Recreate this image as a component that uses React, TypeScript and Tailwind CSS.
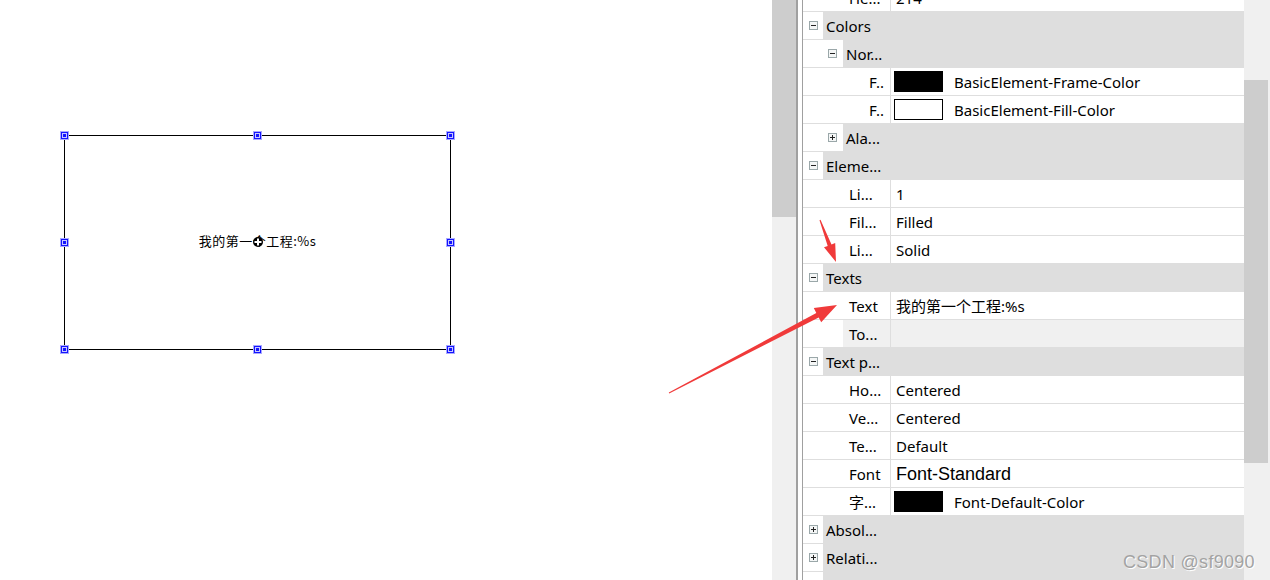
import React from 'react';

type Row =
  | { kind: 'cat'; level: number; label: string; open?: boolean }
  | { kind: 'prop'; level: number; label: string; value?: string; swatch?: string; strong?: boolean; dim?: boolean };

const ROWS: Row[] = [
  { kind: 'prop', level: 1, label: 'He...', value: '214' },
  { kind: 'cat', level: 0, label: 'Colors', open: true },
  { kind: 'cat', level: 1, label: 'Nor...', open: true },
  { kind: 'prop', level: 2, label: 'F..', swatch: '#000', value: 'BasicElement-Frame-Color' },
  { kind: 'prop', level: 2, label: 'F..', swatch: '#fff', value: 'BasicElement-Fill-Color' },
  { kind: 'cat', level: 1, label: 'Ala...' },
  { kind: 'cat', level: 0, label: 'Eleme...', open: true },
  { kind: 'prop', level: 1, label: 'Li...', value: '1' },
  { kind: 'prop', level: 1, label: 'Fil...', value: 'Filled' },
  { kind: 'prop', level: 1, label: 'Li...', value: 'Solid' },
  { kind: 'cat', level: 0, label: 'Texts', open: true },
  { kind: 'prop', level: 1, label: 'Text', value: '我的第一个工程:%s' },
  { kind: 'prop', level: 1, label: 'To...', value: '', dim: true },
  { kind: 'cat', level: 0, label: 'Text p...', open: true },
  { kind: 'prop', level: 1, label: 'Ho...', value: 'Centered' },
  { kind: 'prop', level: 1, label: 'Ve...', value: 'Centered' },
  { kind: 'prop', level: 1, label: 'Te...', value: 'Default' },
  { kind: 'prop', level: 1, label: 'Font', value: 'Font-Standard', strong: true },
  { kind: 'prop', level: 1, label: '字...', swatch: '#000', value: 'Font-Default-Color' },
  { kind: 'cat', level: 0, label: 'Absol...' },
  { kind: 'cat', level: 0, label: 'Relati...' },
  { kind: 'cat', level: 0, label: '' },
];

function Toggle({ open }: { open?: boolean }) {
  return (
    <svg width="9" height="9" viewBox="0 0 9 9" className="shrink-0">
      <rect x="0.5" y="0.5" width="8" height="8" fill="#f4f6f6" stroke="#9aa7a9" />
      <line x1="2" y1="4.5" x2="7" y2="4.5" stroke="#222" />
      {!open && <line x1="4.5" y1="2" x2="4.5" y2="7" stroke="#222" />}
    </svg>
  );
}

function Handle({ x, y }: { x: number; y: number }) {
  return (
    <svg width="9" height="9" viewBox="0 0 9 9" className="absolute" style={{ left: x - 4, top: y - 4 }}>
      <rect x="0" y="0" width="9" height="9" fill="#a8a8ff" />
      <rect x="1" y="1" width="7" height="7" fill="#1414ff" />
      <rect x="2.5" y="2.5" width="4" height="4" fill="none" stroke="#c8c8ff" strokeWidth="1" />
    </svg>
  );
}

function GridRow({ row }: { row: Row }) {
  if (row.kind === 'cat') {
    return (
      <div className="flex h-[28px] border-b border-[#dedede]">
        <div className={row.level === 0 ? 'w-[20px] flex items-center justify-center' : 'w-[40px] flex items-center justify-end pr-[6px]'}>
          <Toggle open={row.open} />
        </div>
        <div className="flex-1 bg-[#dedede] flex items-center pl-[3px] pt-[2px] text-black">{row.label}</div>
      </div>
    );
  }
  const cellW = row.level === 2 ? 'w-[28px]' : 'w-[48px]';
  const indent = row.level === 2 ? 'w-[60px]' : 'w-[40px]';
  return (
    <div className="flex h-[28px] border-b border-[#dedede]">
      <div className={`${indent} shrink-0`} />
      <div className={`${cellW} shrink-0 border-r border-[#dedede] flex items-center pl-[6px] pt-[2px] whitespace-nowrap overflow-hidden ${row.dim ? 'bg-[#f0f0f0]' : ''}`}>
        {row.label}
      </div>
      <div className={`flex-1 flex items-center whitespace-nowrap ${row.dim ? 'bg-[#f0f0f0]' : ''} ${row.swatch ? 'pl-[3px]' : 'pl-[5px] pt-[2px]'}`}>
        {row.swatch && (
          <span className="w-[49px] h-[21px] border border-black mr-[11px] shrink-0" style={{ background: row.swatch }} />
        )}
        <span className={row.strong ? "font-['Liberation_Sans',sans-serif] text-[18px]" : row.swatch ? 'pt-[2px]' : ''}>
          {row.value}
        </span>
      </div>
    </div>
  );
}

export default function App() {
  return (
    <div className="relative w-[1270px] h-[580px] overflow-hidden bg-white flex font-['Noto_Sans','Noto_Sans_CJK_SC',sans-serif] text-[15px] text-black">
      {/* drawing canvas */}
      <div className="relative w-[772px] h-full bg-white shrink-0">
        <div className="absolute left-[64px] top-[135px] w-[387px] h-[215px] border border-black flex items-center justify-center">
          <span className="text-[13px] leading-none tracking-[0.5px] font-['Noto_Sans_CJK_SC',sans-serif] -mt-[5px]">我的第一个工程:%s</span>
        </div>
        {[
          [64, 135], [257, 135], [450, 135],
          [64, 242], [450, 242],
          [64, 349], [257, 349], [450, 349],
        ].map(([x, y]) => (
          <Handle key={`${x}-${y}`} x={x} y={y} />
        ))}
        <svg width="12" height="12" viewBox="0 0 12 12" className="absolute left-[252px] top-[236px]">
          <circle cx="6" cy="6" r="5" fill="#000" />
          <line x1="6" y1="2.5" x2="6" y2="9.5" stroke="#fff" strokeWidth="2" />
          <line x1="2.5" y1="6" x2="9.5" y2="6" stroke="#fff" strokeWidth="2" />
        </svg>
      </div>

      {/* canvas scrollbar */}
      <div className="w-[24px] h-full bg-[#f0f0f0] shrink-0">
        <div className="h-[217px] bg-[#cdcdcd]" />
      </div>
      <div className="w-[2px] h-full bg-[#a0a0a0] shrink-0" />
      <div className="w-[4px] h-full bg-white shrink-0" />
      <div className="w-[1px] h-full bg-[#a0a0a0] shrink-0" />

      {/* property grid */}
      <div className="w-[441px] h-full overflow-hidden shrink-0">
        <div className="-mt-[16px]">
          {ROWS.map((row, i) => (
            <GridRow key={i} row={row} />
          ))}
        </div>
      </div>

      {/* grid scrollbar */}
      <div className="flex-1 h-full bg-[#f0f0f0] flex flex-col">
        <div className="h-[80px]" />
        <div className="h-[383px] w-[24px] bg-[#cdcdcd]" />
      </div>

      {/* annotation arrows */}
      <svg width="1270" height="580" className="absolute inset-0 pointer-events-none">
        <polygon
          fill="#f03a3a"
          points="669.2,393.4 818.7,317.4 821.2,322.3 837,305 813.8,308.1 816.3,312.9 668.8,392.6"
        />
        <polygon
          fill="#f03a3a"
          points="819.5,220.2 827.7,245.9 824,247.3 836,262 835.2,243.1 831.5,244.5 820.5,219.8"
        />
      </svg>

      <div className="absolute left-[1123px] top-[549px] text-[18px] tracking-[0.3px] font-['Liberation_Sans',sans-serif] text-[#a3a3a3] [text-shadow:1px_1px_0_#ffffff]">
        CSDN @sf9090
      </div>
    </div>
  );
}
